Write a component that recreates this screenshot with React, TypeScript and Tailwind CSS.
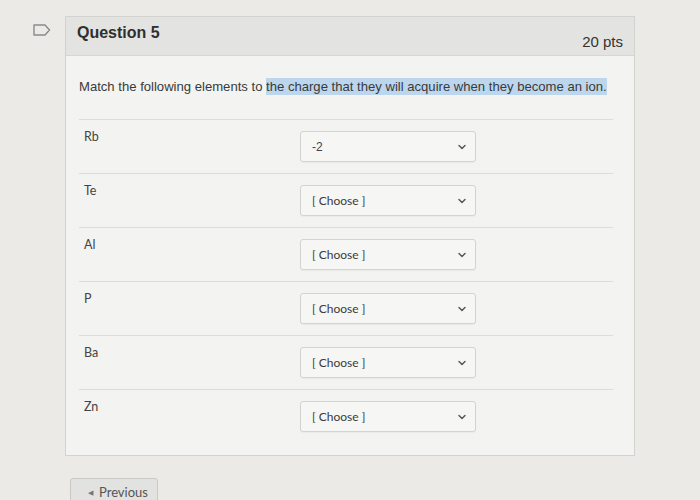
import { ChevronDown } from "lucide-react";

const rows = [
  { el: "Rb", value: "-2" },
  { el: "Te", value: "[ Choose ]" },
  { el: "Al", value: "[ Choose ]" },
  { el: "P", value: "[ Choose ]" },
  { el: "Ba", value: "[ Choose ]" },
  { el: "Zn", value: "[ Choose ]" },
];

function FlagIcon() {
  return (
    <svg width="18" height="12" viewBox="0 0 18 12" fill="none" aria-hidden>
      <path
        d="M1 1h11l4.5 5-4.5 5H1z"
        stroke="#8a8a8a"
        strokeWidth="1.4"
        strokeLinejoin="round"
      />
    </svg>
  );
}

function FakeSelect({ value }: { value: string }) {
  const isPlaceholder = value.startsWith("[");
  return (
    <div className="flex h-[31px] w-[176px] items-center justify-between rounded-[3px] border border-[#d3d3d1] bg-[#f6f6f4] pr-[7px] pl-[11px] shadow-[0_1px_1px_rgba(0,0,0,0.04)]">
      <span
        className={
          isPlaceholder
            ? "font-['Lato'] text-[12px] text-[#3a3a3a]"
            : "font-['Liberation_Sans'] text-[12px] text-[#444]"
        }
      >
        {value}
      </span>
      <ChevronDown className="size-[12px] text-[#5a5a5a]" strokeWidth={3} aria-hidden />
    </div>
  );
}

export default function App() {
  return (
    <div className="relative h-[500px] w-[700px] overflow-hidden bg-[#ebeae7] font-['Liberation_Sans',sans-serif]">
      <div className="flex pt-[16px] pl-[33px]">
        <div className="pt-[8px]">
          <FlagIcon />
        </div>
        <div className="ml-[14px] flex flex-col">
          <div className="w-[570px] border border-[#d2d2cf] bg-[#f3f3f1]">
            <div className="flex h-[39px] items-start justify-between border-b border-[#d6d6d3] bg-[#e3e3e1] px-[11px]">
              <h2 className="pt-[4px] text-[16px] font-bold text-[#2f2f2f]">
                Question 5
              </h2>
              <span className="pt-[14px] text-[15px] font-medium text-[#333]">
                20 pts
              </span>
            </div>
            <div className="px-[13px] pt-[22px] pb-[12px]">
              <p className="text-[13.1px] leading-[18px] whitespace-nowrap text-[#3a3a3a]">
                Match the following elements to{" "}
                <span className="bg-[#bcd6ee] py-[1px]">
                  the charge that they will acquire when they become an ion.
                </span>
              </p>
              <div className="mt-[23px] mr-[8px]">
                {rows.map((r) => (
                  <div
                    key={r.el}
                    className="grid grid-cols-[216px_176px] border-t border-[#dcdcd9] pt-[11px] pb-[11px] pl-[5px]"
                  >
                    <span className="-mt-[2px] font-['Lato'] text-[12.5px] leading-[16px] text-[#444]">
                      {r.el}
                    </span>
                    <FakeSelect value={r.value} />
                  </div>
                ))}
              </div>
            </div>
          </div>
          <div className="mt-[22px] ml-[5px] flex h-[34px] w-[88px] items-start gap-[6px] rounded-[3px] border border-[#c9c9c6] bg-[#e2e2e0] pt-[4px] pl-[17px] font-['Lato'] text-[13px] text-[#555]">
            <span className="text-[7px] leading-[18px] text-[#777]">◀</span>
            <span className="leading-[18px]">Previous</span>
          </div>
        </div>
      </div>
    </div>
  );
}
